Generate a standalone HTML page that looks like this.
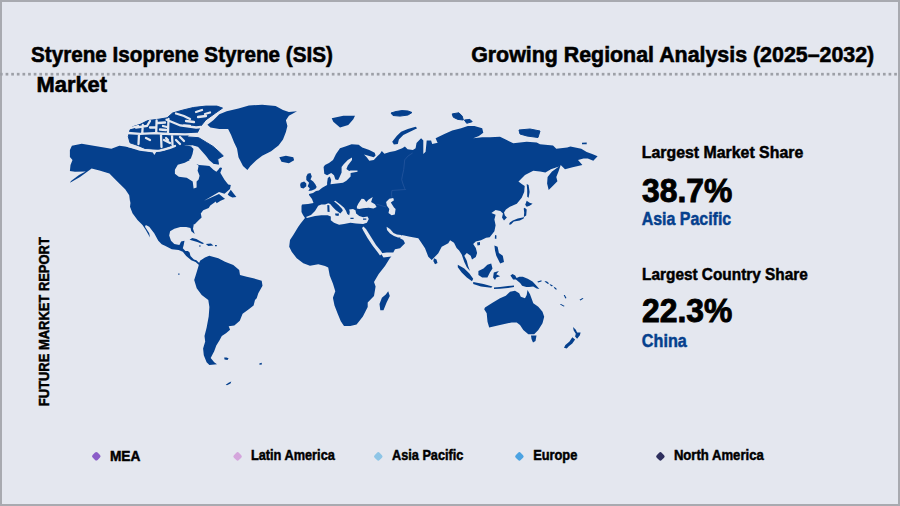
<!DOCTYPE html>
<html><head><meta charset="utf-8"><style>
html,body{margin:0;padding:0;}
body{width:900px;height:506px;overflow:hidden;background:#e4e7ef;position:relative;font-family:"Liberation Sans",sans-serif;}
.frame{position:absolute;left:0;top:0;width:896px;height:502px;border:2px solid #a8aab0;}
svg.map{position:absolute;left:0;top:0;}
</style></head><body>
<div class="frame"></div>
<svg class="map" width="900" height="506" viewBox="0 0 900 506"><path fill="#05408d" d="M69.9 150.0L71.9 145.8L81.7 143.8L99.5 146.8L111.4 148.8L119.3 145.8L125.0 146.6L132.9 148.2L140.8 149.8L148.7 151.4L152.7 152.2L154.3 155.0L156.6 151.4L164.6 150.6L169.3 148.2L172.5 145.1L174.4 141.0L178.3 144.0L181.3 144.5L186.9 145.5L191.6 146.5L193.5 149.0L192.5 154.0L191.0 158.0L190.0 160.5L195.0 163.5L199.0 165.0L205.0 165.6L209.4 166.0L213.4 169.8L216.4 171.7L218.3 169.8L220.3 167.0L222.3 167.5L220.3 172.7L224.3 179.6L228.2 184.6L230.8 185.0L230.0 189.0L224.5 193.7L219.0 192.1L204.0 200.8L219.0 194.0L224.5 198.4L225.3 198.8L220.6 200.8L216.6 203.2L215.8 201.6L210.3 205.6L208.7 207.9L203.2 210.3L200.8 213.5L201.6 217.4L198.4 220.6L194.5 224.5L193.9 223.7L193.0 228.8L194.7 233.9L191.3 231.3L190.5 227.9L186.2 227.1L180.3 227.1L174.3 228.8L170.1 231.3L169.2 235.6L171.0 240.7L174.3 244.1L179.4 244.9L181.1 241.5L184.5 240.7L183.7 244.9L182.8 248.3L185.4 250.9L187.9 250.9L189.6 252.6L190.5 256.0L193.9 259.4L196.4 260.2L199.0 262.8L201.5 260.2L203.5 259.0L203.0 262.0L199.0 265.0L195.6 261.9L191.3 260.2L186.2 256.0L182.8 251.7L178.6 250.0L171.8 249.2L165.0 245.8L161.7 244.2L158.3 240.8L154.2 233.3L149.2 226.7L145.8 225.0L145.0 226.7L149.2 233.3L150.0 237.5L145.8 230.0L142.5 225.0L137.5 220.0L132.5 213.3L130.0 206.7L130.8 200.0L130.2 203.1L129.2 195.2L125.2 189.3L117.3 181.4L109.4 173.5L99.5 170.5L91.6 168.5L89.6 170.0L80.0 177.0L70.0 182.8L71.0 181.0L79.0 175.0L85.7 171.5L75.0 171.8L69.9 171.0L70.5 165.0L72.5 160.0L69.9 157.0ZM207.4 124.7L213.3 120.2L219.3 114.3L226.7 111.3L238.5 108.4L248.9 105.4L262.2 104.7L275.6 106.1L283.0 109.9L288.9 112.1L297.0 111.3L288.9 115.8L285.9 120.2L287.4 126.1L285.9 132.1L283.0 139.5L278.5 145.4L271.1 151.3L262.2 155.8L256.3 160.2L250.4 166.1L247.4 169.9L243.0 166.1L238.5 157.3L237.0 148.4L234.1 142.4L231.1 135.0L228.1 129.1L219.3 129.1L210.4 127.6ZM279.3 157.3L285.9 155.8L293.3 157.3L294.1 160.2L288.9 163.2L281.5 161.7ZM307.7 173.8L310.5 173.1L311.8 176.6L310.5 179.4L313.2 181.5L315.3 184.2L316.7 187.0L315.3 189.1L311.8 190.4L308.4 191.1L309.8 188.4L307.7 186.3L309.1 182.8L306.3 180.1L306.3 176.6ZM300.8 182.8L304.2 181.5L306.3 183.5L306.3 186.3L303.5 188.4L300.8 187.7L300.1 184.9ZM331.7 118.3L343.3 115.8L355.0 115.8L353.3 119.2L348.3 125.0L340.0 127.5L333.3 121.7ZM392.2 141.7L396.7 136.1L401.1 131.7L407.8 128.9L415.6 126.7L417.2 128.3L410.0 131.7L403.3 135.0L398.9 139.4L397.8 143.9L393.9 144.4ZM582.0 142.7L586.7 142.5L586.7 144.3L582.0 144.3ZM325.0 165.0L329.0 163.0L333.0 160.0L336.0 154.0L340.0 148.3L345.3 146.6L351.6 144.3L358.7 144.8L362.2 147.4L369.3 150.1L374.7 152.8L375.6 155.4L373.8 157.2L370.2 156.3L364.0 154.6L366.7 157.2L369.3 160.8L373.8 159.9L377.3 156.3L380.0 153.7L381.8 151.0L384.4 153.7L389.8 151.9L395.1 151.0L402.2 148.3L404.9 146.6L407.6 149.2L412.9 150.1L415.6 148.3L416.5 143.0L421.1 138.3L423.3 140.6L423.3 153.9L425.6 151.7L426.7 140.6L431.1 140.6L432.2 143.9L437.8 142.8L438.9 146.1L435.6 138.3L444.4 133.9L452.2 130.6L461.1 128.3L467.8 126.1L474.4 126.1L482.2 128.3L483.3 132.8L478.9 136.1L473.3 138.3L482.2 137.2L490.0 137.2L500.0 136.7L506.7 140.0L513.3 143.3L526.7 141.7L536.7 142.5L540.0 144.3L553.0 145.4L556.3 148.7L567.2 147.6L570.4 146.5L581.3 148.7L586.7 152.0L592.2 154.1L597.6 156.3L593.3 160.7L587.8 158.5L583.5 158.5L578.0 160.1L582.4 165.0L572.6 167.2L565.0 169.3L560.7 165.0L558.5 171.5L556.3 177.0L557.4 181.3L553.0 185.7L548.7 190.0L547.1 183.5L547.6 177.0L552.0 171.5L559.0 166.5L550.9 169.3L545.4 172.6L540.0 171.5L533.3 170.8L525.0 175.0L518.3 181.7L517.8 181.0L521.7 184.0L524.7 185.9L524.2 191.9L521.7 197.8L516.8 203.7L509.9 206.7L505.9 209.6L504.0 212.6L504.9 215.6L506.9 217.5L504.0 220.5L502.0 217.5L503.0 213.6L500.3 211.1L495.6 209.9L491.4 212.9L495.6 214.7L494.4 219.4L495.6 225.3L494.4 231.3L489.7 237.2L486.1 237.7L481.0 240.3L475.8 241.6L473.2 244.1L475.8 248.0L477.1 253.1L475.8 257.0L472.0 259.5L470.7 255.7L466.8 253.1L464.3 255.7L466.8 260.8L468.1 265.9L470.0 271.1L466.8 267.2L464.3 262.1L463.0 258.2L461.7 254.4L459.1 250.5L456.6 248.0L454.0 242.8L450.1 240.3L448.3 243.3L441.7 246.7L438.3 253.3L431.7 260.0L428.3 256.7L425.0 248.3L421.7 243.3L418.3 238.3L410.0 236.7L401.7 235.0L400.0 238.3L403.3 240.0L405.0 243.3L400.0 248.3L395.0 249.2L393.3 252.5L386.7 252.5L380.8 253.3L383.5 257.4L391.4 256.6L389.8 258.2L385.0 266.1L378.7 274.0L374.0 281.9L375.6 286.6L374.0 296.1L367.7 302.4L367.7 307.1L362.9 316.6L356.6 324.5L350.3 326.1L344.0 326.1L340.8 321.3L337.6 313.5L334.5 305.6L332.9 297.7L335.3 291.3L332.9 283.4L329.7 275.5L328.2 267.6L325.0 266.0L318.3 264.2L310.0 265.8L303.3 263.3L296.7 258.3L291.7 251.7L289.2 246.7L290.0 240.0L293.3 235.0L298.3 226.7L301.0 223.0L305.0 218.0L303.0 215.0L301.5 212.0L301.5 206.0L302.0 204.5L308.0 204.0L313.5 203.0L312.0 199.0L309.0 195.0L309.0 194.0L313.0 193.0L316.0 191.0L318.8 190.4L322.2 187.7L327.1 184.9L327.1 182.8L327.8 178.0L329.8 176.6L331.2 180.1L330.5 184.2L336.8 183.5L343.0 182.8L346.4 180.8L350.6 176.6L350.6 173.1L357.5 171.8L357.5 170.4L350.6 170.4L349.2 171.1L346.4 169.0L347.8 165.5L352.0 160.0L352.0 157.5L347.8 160.0L343.7 164.2L341.6 166.9L341.6 172.5L339.5 177.3L338.1 180.1L335.4 179.4L334.0 175.2L331.2 173.1L327.1 175.2L324.3 173.8L323.6 166.9ZM200.0 260.8L205.0 257.5L209.2 255.8L218.3 258.3L225.0 261.7L233.3 265.0L239.2 270.0L240.0 275.0L246.7 276.7L253.3 278.3L261.7 280.8L262.5 285.8L258.3 293.3L256.7 298.3L255.0 300.0L253.6 305.5L248.1 309.7L242.6 313.8L239.8 320.7L234.3 325.6L228.7 326.3L230.1 329.7L226.0 333.2L221.8 336.0L219.7 340.1L216.3 345.6L214.2 351.2L212.1 355.3L210.7 358.1L214.2 362.2L217.0 364.3L209.4 365.0L206.6 362.2L203.8 355.3L203.1 348.4L205.2 341.5L204.5 336.0L206.6 327.7L208.7 316.6L209.4 306.9L208.3 300.0L201.7 295.0L196.7 288.3L194.2 280.0L195.8 275.0L198.3 266.7ZM224.2 357.6L226.5 357.4L228.6 358.2L227.5 359.9L224.5 359.6ZM388.2 291.3L389.8 296.1L386.6 302.4L383.5 310.3L380.3 310.3L379.5 304.0L381.9 297.7L385.8 294.5ZM434.0 258.3L436.5 259.5L437.5 263.0L435.0 264.2L433.3 261.0ZM495.0 235.0L496.5 235.5L496.3 239.0L494.8 238.5ZM526.7 200.7L529.6 202.7L532.6 203.7L529.6 205.7L526.7 206.7L525.2 204.7ZM524.7 207.7L526.7 209.6L526.2 215.6L522.7 217.5L517.8 218.5L512.8 220.5L509.9 222.5L508.9 224.4L510.9 224.4L513.8 221.5L519.8 220.5L523.7 218.5L524.2 212.6L523.7 208.6ZM526.7 184.0L528.6 184.9L529.6 191.9L528.6 197.8L527.2 196.8L527.2 189.9ZM457.8 264.7L464.3 268.5L469.4 273.6L473.2 278.8L472.0 281.3L466.8 277.5L461.7 272.4L457.8 267.2ZM473.2 282.0L483.5 283.9L492.5 286.5L491.2 287.8L481.0 286.5L473.2 283.9ZM478.4 271.1L483.5 268.5L487.4 264.7L491.2 263.4L492.5 268.5L489.9 272.4L487.4 277.5L482.2 277.5L478.4 274.9ZM493.8 272.4L498.9 271.1L496.3 274.3L500.2 276.2L496.3 277.5L495.0 280.1L493.1 277.5ZM494.4 245.4L497.6 246.7L498.9 253.1L502.8 255.7L504.0 262.1L500.2 263.4L496.3 255.7L495.0 250.5ZM510.4 275.4L512.5 274.0L515.2 275.4L516.6 278.1L519.4 276.8L522.8 276.8L527.7 278.8L532.5 281.6L535.3 284.4L539.4 288.9L536.7 288.5L533.2 286.5L529.1 287.1L526.3 287.1L522.1 285.8L520.1 283.0L515.9 279.5L513.1 279.5L511.8 277.5ZM485.0 307.5L491.7 303.3L500.0 298.3L505.8 295.8L510.0 291.7L515.0 290.8L519.2 293.3L520.8 296.7L525.0 298.3L526.7 295.0L527.5 290.0L530.0 294.2L533.3 303.3L538.3 306.7L542.5 311.7L544.2 316.7L542.5 323.3L538.3 330.0L534.2 334.2L528.3 334.2L523.3 330.0L520.0 325.0L516.7 322.5L511.7 322.5L503.3 324.2L496.7 325.8L489.2 327.5L487.5 321.7L486.7 313.3L484.2 309.2ZM531.0 335.5L536.5 335.5L535.5 341.0L533.0 342.5L531.5 339.0ZM573.0 326.9L575.8 329.7L577.1 332.5L580.6 332.5L579.9 335.2L577.1 338.7L575.1 336.6L575.8 333.8L573.7 330.4ZM572.3 337.3L575.1 339.4L572.3 343.5L568.8 346.3L566.8 348.4L564.0 347.7L565.4 344.9L569.5 341.5ZM189.6 239.8L192.2 238.1L196.4 239.0L200.7 241.5L204.1 243.2L202.4 243.9L197.3 241.9L192.2 240.5ZM205.8 244.1L210.9 243.5L213.4 245.4L208.3 246.0ZM227.7 194.5L230.8 189.7L233.2 192.9L236.4 196.9L232.4 197.6L229.3 196.1ZM477.0 242.5L480.0 242.0L480.0 245.0L477.5 245.4ZM494.0 287.5L500.0 287.0L508.0 286.0L514.0 285.5L514.0 287.0L508.0 288.0L500.0 288.8L494.0 289.0ZM537.4 281.6L541.5 280.2L541.5 281.6L538.0 282.6ZM199.0 245.4L200.7 245.4L200.7 246.6L199.0 246.6ZM215.0 245.0L216.8 245.0L216.8 246.2L215.0 246.2ZM259.3 363.5L261.7 362.8L261.9 364.4L259.5 364.8ZM225.7 384.8L229.0 382.6L231.3 381.6L230.5 383.4L227.0 385.3ZM178.2 273.6L179.5 273.6L179.5 274.8L178.2 274.8ZM544.5 281.0L547.0 281.5L549.0 283.3L548.0 284.0L545.5 282.3ZM549.5 284.0L552.0 285.0L553.0 286.0L551.0 286.2ZM553.5 286.5L556.0 288.0L557.0 289.5L555.0 289.2ZM563.7 295.0L564.8 295.0L566.5 298.0L565.3 298.6ZM559.8 304.2L561.0 304.0L564.7 306.0L563.5 306.6ZM579.5 299.8L582.5 298.1L583.5 298.6L580.5 300.6Z"/><path fill="#05408d" stroke="#05408d" stroke-width="1" stroke-linejoin="round" d="M181.5 138.3L188.4 137.0L198.7 137.7L206.6 142.5L213.0 146.4L219.3 152.0L223.3 155.9L217.7 159.1L218.5 164.6L213.0 164.6L208.2 159.9L205.1 155.9L201.1 152.0L197.2 146.4L191.6 144.9L186.9 144.9L181.3 143.3ZM391.0 113.0L396.0 111.5L402.0 110.6L408.0 111.0L412.0 112.5L408.0 115.0L400.0 116.1L393.0 115.5ZM452.2 113.9L458.9 112.8L462.2 116.1L463.3 120.0L457.8 119.4L453.3 117.2ZM519.0 130.0L530.0 129.0L540.0 131.0L538.0 137.5L527.0 136.0L520.0 134.0ZM464.4 120.0L470.0 119.4L472.2 121.7L466.7 123.3ZM128.3 136.5L130.0 130.0L132.5 126.8L140.8 124.1L147.7 120.6L158.8 119.2L167.1 117.8L172.6 113.0L182.3 110.2L193.4 107.5L205.8 106.1L216.9 106.1L222.5 108.1L215.5 113.0L205.8 119.9L200.3 126.8L197.5 132.4L188.0 135.0L186.0 143.7L180.0 146.0L172.5 145.1L164.0 148.5L158.0 149.5L145.0 148.5L138.0 145.5L130.0 142.8Z"/><path fill="#e4e7ef" d="M174.9 169.8L177.8 164.8L184.8 162.8L188.0 161.0L191.0 160.0L194.5 162.2L198.6 165.8L197.6 170.7L199.6 175.7L198.6 179.6L196.6 181.6L196.6 187.5L193.6 188.5L192.7 181.6L186.7 177.7L178.8 176.7L174.9 173.7ZM306.0 217.0L311.0 215.0L315.0 211.0L318.2 205.8L321.3 204.5L325.1 204.5L328.3 203.2L330.2 203.9L332.7 207.0L335.9 210.2L338.4 212.1L340.3 213.4L341.6 212.1L342.8 210.8L342.2 208.9L338.4 205.1L334.0 201.3L335.3 200.7L340.3 204.5L344.1 207.7L346.0 210.8L347.3 214.0L349.2 215.3L349.8 212.1L349.2 209.6L353.0 208.9L355.5 210.2L356.1 213.4L359.3 215.9L363.1 217.2L367.5 216.5L368.8 219.0L366.9 222.8L363.1 224.1L356.1 223.5L350.4 222.8L344.1 224.1L339.1 224.7L334.0 222.8L330.8 220.3L330.8 216.5L327.7 215.3L321.3 215.3L315.0 215.9L307.0 218.0ZM356.9 206.6L358.4 203.4L361.6 198.7L364.0 199.1L366.3 201.9L368.7 199.5L372.7 197.1L371.1 201.9L375.0 204.2L376.6 207.0L373.5 208.6L368.7 207.8L363.2 208.2L359.2 209.0L356.9 208.6ZM386.1 201.9L389.3 198.7L393.2 197.9L394.0 200.3L390.8 202.6L394.0 207.4L395.6 209.0L394.8 214.5L391.6 215.3L388.5 212.9L389.3 209.0L386.9 205.8ZM363.5 226.5L366.0 229.0L371.0 237.0L376.0 245.0L381.0 251.0L382.5 253.5L380.0 255.5L377.5 252.0L372.5 245.5L367.5 238.0L363.5 231.0L362.0 228.0ZM386.6 226.8L390.0 229.0L393.5 233.0L397.0 234.5L401.0 235.0L402.0 237.5L398.0 237.5L394.0 236.0L390.0 233.5L387.0 230.0Z"/><path fill="none" stroke="#e4e7ef" stroke-width="2.3" stroke-linecap="round" d="M192.8,146.5 L197.5,148 L201.5,152.5 L205,156.5 L208,160.5 L213,164.8 L219,166 L223.5,166.8 M190.5,160 L195,163.5 M128,133 L140,133.8 L154.6,133.2 L169.4,134 L185,134.3 L197,134 M166.5,119.8 L180.3,125.5 L196.1,127.5 L201,127 M142.8,125 L142.3,132.5 M156.6,120.5 L156.2,132.5 M168.5,119 L168,132.5 M139,134.5 L138.5,144 M161,135 L161.5,147 M172,135 L172.5,145 M150,121 L147,126 L136,127.5 M128,146 L140,149.6 L152,151 L160,150.6 L170,147.8 L175,146 M176,113.5 L184,116 L190,119 M150,127.5 L156,127.5 M163,126 L167,127 M180,137 L184,141 M166,138 L168,140 M146,138 L150,140 M184,125.5 L190,126 M158,123 L165,122.5 M196,112 L202,110 M205,114 L210,112.5 M131,128 L138,126 M160,129.5 L166,130 M164,140 L170,143 M176,140 L180,144 M186,121 L194,122 M198,117 L206,116"/><path fill="#05408d" d="M327.3 205.1L329.3 205.3L329.6 212.1L327.5 211.8ZM335.0 213.6L339.1 213.4L338.5 215.9L335.5 215.5ZM350.4 217.8L353.6 217.8L353.6 219.0L350.4 219.0ZM363.0 218.4L366.3 218.4L366.3 219.7L363.0 219.7Z"/><path fill="none" stroke="#2f5da3" stroke-width="0.6" d="M412.6,153 L408,156 L404.7,159.9 L404.2,165 L403.7,169.8 L402.5,175 L401.7,179.6 L403,184 L404.7,188.5 L405.7,189.5 L398,190 L391.9,190.5 L391.5,194 L391.9,197.4 M376.6,204.2 L381,205.5 L386.1,207"/><rect x="-0.02" y="72.85" width="2.7" height="2.7" fill="#9da0a7"/><rect x="5.60" y="72.85" width="2.7" height="2.7" fill="#9da0a7"/><rect x="11.23" y="72.85" width="2.7" height="2.7" fill="#9da0a7"/><rect x="16.85" y="72.85" width="2.7" height="2.7" fill="#9da0a7"/><rect x="22.48" y="72.85" width="2.7" height="2.7" fill="#9da0a7"/><rect x="28.10" y="72.85" width="2.7" height="2.7" fill="#9da0a7"/><rect x="33.72" y="72.85" width="2.7" height="2.7" fill="#9da0a7"/><rect x="39.35" y="72.85" width="2.7" height="2.7" fill="#9da0a7"/><rect x="44.97" y="72.85" width="2.7" height="2.7" fill="#9da0a7"/><rect x="50.60" y="72.85" width="2.7" height="2.7" fill="#9da0a7"/><rect x="56.22" y="72.85" width="2.7" height="2.7" fill="#9da0a7"/><rect x="61.84" y="72.85" width="2.7" height="2.7" fill="#9da0a7"/><rect x="67.47" y="72.85" width="2.7" height="2.7" fill="#9da0a7"/><rect x="73.09" y="72.85" width="2.7" height="2.7" fill="#9da0a7"/><rect x="78.72" y="72.85" width="2.7" height="2.7" fill="#9da0a7"/><rect x="84.34" y="72.85" width="2.7" height="2.7" fill="#9da0a7"/><rect x="89.96" y="72.85" width="2.7" height="2.7" fill="#9da0a7"/><rect x="95.59" y="72.85" width="2.7" height="2.7" fill="#9da0a7"/><rect x="101.21" y="72.85" width="2.7" height="2.7" fill="#9da0a7"/><rect x="106.84" y="72.85" width="2.7" height="2.7" fill="#9da0a7"/><rect x="112.46" y="72.85" width="2.7" height="2.7" fill="#9da0a7"/><rect x="118.08" y="72.85" width="2.7" height="2.7" fill="#9da0a7"/><rect x="123.71" y="72.85" width="2.7" height="2.7" fill="#9da0a7"/><rect x="129.33" y="72.85" width="2.7" height="2.7" fill="#9da0a7"/><rect x="134.96" y="72.85" width="2.7" height="2.7" fill="#9da0a7"/><rect x="140.58" y="72.85" width="2.7" height="2.7" fill="#9da0a7"/><rect x="146.20" y="72.85" width="2.7" height="2.7" fill="#9da0a7"/><rect x="151.83" y="72.85" width="2.7" height="2.7" fill="#9da0a7"/><rect x="157.45" y="72.85" width="2.7" height="2.7" fill="#9da0a7"/><rect x="163.08" y="72.85" width="2.7" height="2.7" fill="#9da0a7"/><rect x="168.70" y="72.85" width="2.7" height="2.7" fill="#9da0a7"/><rect x="174.32" y="72.85" width="2.7" height="2.7" fill="#9da0a7"/><rect x="179.95" y="72.85" width="2.7" height="2.7" fill="#9da0a7"/><rect x="185.57" y="72.85" width="2.7" height="2.7" fill="#9da0a7"/><rect x="191.20" y="72.85" width="2.7" height="2.7" fill="#9da0a7"/><rect x="196.82" y="72.85" width="2.7" height="2.7" fill="#9da0a7"/><rect x="202.44" y="72.85" width="2.7" height="2.7" fill="#9da0a7"/><rect x="208.07" y="72.85" width="2.7" height="2.7" fill="#9da0a7"/><rect x="213.69" y="72.85" width="2.7" height="2.7" fill="#9da0a7"/><rect x="219.32" y="72.85" width="2.7" height="2.7" fill="#9da0a7"/><rect x="224.94" y="72.85" width="2.7" height="2.7" fill="#9da0a7"/><rect x="230.56" y="72.85" width="2.7" height="2.7" fill="#9da0a7"/><rect x="236.19" y="72.85" width="2.7" height="2.7" fill="#9da0a7"/><rect x="241.81" y="72.85" width="2.7" height="2.7" fill="#9da0a7"/><rect x="247.44" y="72.85" width="2.7" height="2.7" fill="#9da0a7"/><rect x="253.06" y="72.85" width="2.7" height="2.7" fill="#9da0a7"/><rect x="258.68" y="72.85" width="2.7" height="2.7" fill="#9da0a7"/><rect x="264.31" y="72.85" width="2.7" height="2.7" fill="#9da0a7"/><rect x="269.93" y="72.85" width="2.7" height="2.7" fill="#9da0a7"/><rect x="275.56" y="72.85" width="2.7" height="2.7" fill="#9da0a7"/><rect x="281.18" y="72.85" width="2.7" height="2.7" fill="#9da0a7"/><rect x="286.80" y="72.85" width="2.7" height="2.7" fill="#9da0a7"/><rect x="292.43" y="72.85" width="2.7" height="2.7" fill="#9da0a7"/><rect x="298.05" y="72.85" width="2.7" height="2.7" fill="#9da0a7"/><rect x="303.68" y="72.85" width="2.7" height="2.7" fill="#9da0a7"/><rect x="309.30" y="72.85" width="2.7" height="2.7" fill="#9da0a7"/><rect x="314.92" y="72.85" width="2.7" height="2.7" fill="#9da0a7"/><rect x="320.55" y="72.85" width="2.7" height="2.7" fill="#9da0a7"/><rect x="326.17" y="72.85" width="2.7" height="2.7" fill="#9da0a7"/><rect x="331.80" y="72.85" width="2.7" height="2.7" fill="#9da0a7"/><rect x="337.42" y="72.85" width="2.7" height="2.7" fill="#9da0a7"/><rect x="343.04" y="72.85" width="2.7" height="2.7" fill="#9da0a7"/><rect x="348.67" y="72.85" width="2.7" height="2.7" fill="#9da0a7"/><rect x="354.29" y="72.85" width="2.7" height="2.7" fill="#9da0a7"/><rect x="359.92" y="72.85" width="2.7" height="2.7" fill="#9da0a7"/><rect x="365.54" y="72.85" width="2.7" height="2.7" fill="#9da0a7"/><rect x="371.16" y="72.85" width="2.7" height="2.7" fill="#9da0a7"/><rect x="376.79" y="72.85" width="2.7" height="2.7" fill="#9da0a7"/><rect x="382.41" y="72.85" width="2.7" height="2.7" fill="#9da0a7"/><rect x="388.04" y="72.85" width="2.7" height="2.7" fill="#9da0a7"/><rect x="393.66" y="72.85" width="2.7" height="2.7" fill="#9da0a7"/><rect x="399.28" y="72.85" width="2.7" height="2.7" fill="#9da0a7"/><rect x="404.91" y="72.85" width="2.7" height="2.7" fill="#9da0a7"/><rect x="410.53" y="72.85" width="2.7" height="2.7" fill="#9da0a7"/><rect x="416.16" y="72.85" width="2.7" height="2.7" fill="#9da0a7"/><rect x="421.78" y="72.85" width="2.7" height="2.7" fill="#9da0a7"/><rect x="427.40" y="72.85" width="2.7" height="2.7" fill="#9da0a7"/><rect x="433.03" y="72.85" width="2.7" height="2.7" fill="#9da0a7"/><rect x="438.65" y="72.85" width="2.7" height="2.7" fill="#9da0a7"/><rect x="444.28" y="72.85" width="2.7" height="2.7" fill="#9da0a7"/><rect x="449.90" y="72.85" width="2.7" height="2.7" fill="#9da0a7"/><rect x="455.52" y="72.85" width="2.7" height="2.7" fill="#9da0a7"/><rect x="461.15" y="72.85" width="2.7" height="2.7" fill="#9da0a7"/><rect x="466.77" y="72.85" width="2.7" height="2.7" fill="#9da0a7"/><rect x="472.40" y="72.85" width="2.7" height="2.7" fill="#9da0a7"/><rect x="478.02" y="72.85" width="2.7" height="2.7" fill="#9da0a7"/><rect x="483.64" y="72.85" width="2.7" height="2.7" fill="#9da0a7"/><rect x="489.27" y="72.85" width="2.7" height="2.7" fill="#9da0a7"/><rect x="494.89" y="72.85" width="2.7" height="2.7" fill="#9da0a7"/><rect x="500.52" y="72.85" width="2.7" height="2.7" fill="#9da0a7"/><rect x="506.14" y="72.85" width="2.7" height="2.7" fill="#9da0a7"/><rect x="511.76" y="72.85" width="2.7" height="2.7" fill="#9da0a7"/><rect x="517.39" y="72.85" width="2.7" height="2.7" fill="#9da0a7"/><rect x="523.01" y="72.85" width="2.7" height="2.7" fill="#9da0a7"/><rect x="528.64" y="72.85" width="2.7" height="2.7" fill="#9da0a7"/><rect x="534.26" y="72.85" width="2.7" height="2.7" fill="#9da0a7"/><rect x="539.88" y="72.85" width="2.7" height="2.7" fill="#9da0a7"/><rect x="545.51" y="72.85" width="2.7" height="2.7" fill="#9da0a7"/><rect x="551.13" y="72.85" width="2.7" height="2.7" fill="#9da0a7"/><rect x="556.76" y="72.85" width="2.7" height="2.7" fill="#9da0a7"/><rect x="562.38" y="72.85" width="2.7" height="2.7" fill="#9da0a7"/><rect x="568.00" y="72.85" width="2.7" height="2.7" fill="#9da0a7"/><rect x="573.63" y="72.85" width="2.7" height="2.7" fill="#9da0a7"/><rect x="579.25" y="72.85" width="2.7" height="2.7" fill="#9da0a7"/><rect x="584.88" y="72.85" width="2.7" height="2.7" fill="#9da0a7"/><rect x="590.50" y="72.85" width="2.7" height="2.7" fill="#9da0a7"/><rect x="596.12" y="72.85" width="2.7" height="2.7" fill="#9da0a7"/><rect x="601.75" y="72.85" width="2.7" height="2.7" fill="#9da0a7"/><rect x="607.37" y="72.85" width="2.7" height="2.7" fill="#9da0a7"/><rect x="613.00" y="72.85" width="2.7" height="2.7" fill="#9da0a7"/><rect x="618.62" y="72.85" width="2.7" height="2.7" fill="#9da0a7"/><rect x="624.24" y="72.85" width="2.7" height="2.7" fill="#9da0a7"/><rect x="629.87" y="72.85" width="2.7" height="2.7" fill="#9da0a7"/><rect x="635.49" y="72.85" width="2.7" height="2.7" fill="#9da0a7"/><rect x="641.12" y="72.85" width="2.7" height="2.7" fill="#9da0a7"/><rect x="646.74" y="72.85" width="2.7" height="2.7" fill="#9da0a7"/><rect x="652.36" y="72.85" width="2.7" height="2.7" fill="#9da0a7"/><rect x="657.99" y="72.85" width="2.7" height="2.7" fill="#9da0a7"/><rect x="663.61" y="72.85" width="2.7" height="2.7" fill="#9da0a7"/><rect x="669.24" y="72.85" width="2.7" height="2.7" fill="#9da0a7"/><rect x="674.86" y="72.85" width="2.7" height="2.7" fill="#9da0a7"/><rect x="680.48" y="72.85" width="2.7" height="2.7" fill="#9da0a7"/><rect x="686.11" y="72.85" width="2.7" height="2.7" fill="#9da0a7"/><rect x="691.73" y="72.85" width="2.7" height="2.7" fill="#9da0a7"/><rect x="697.36" y="72.85" width="2.7" height="2.7" fill="#9da0a7"/><rect x="702.98" y="72.85" width="2.7" height="2.7" fill="#9da0a7"/><rect x="708.60" y="72.85" width="2.7" height="2.7" fill="#9da0a7"/><rect x="714.23" y="72.85" width="2.7" height="2.7" fill="#9da0a7"/><rect x="719.85" y="72.85" width="2.7" height="2.7" fill="#9da0a7"/><rect x="725.48" y="72.85" width="2.7" height="2.7" fill="#9da0a7"/><rect x="731.10" y="72.85" width="2.7" height="2.7" fill="#9da0a7"/><rect x="736.72" y="72.85" width="2.7" height="2.7" fill="#9da0a7"/><rect x="742.35" y="72.85" width="2.7" height="2.7" fill="#9da0a7"/><rect x="747.97" y="72.85" width="2.7" height="2.7" fill="#9da0a7"/><rect x="753.60" y="72.85" width="2.7" height="2.7" fill="#9da0a7"/><rect x="759.22" y="72.85" width="2.7" height="2.7" fill="#9da0a7"/><rect x="764.84" y="72.85" width="2.7" height="2.7" fill="#9da0a7"/><rect x="770.47" y="72.85" width="2.7" height="2.7" fill="#9da0a7"/><rect x="776.09" y="72.85" width="2.7" height="2.7" fill="#9da0a7"/><rect x="781.72" y="72.85" width="2.7" height="2.7" fill="#9da0a7"/><rect x="787.34" y="72.85" width="2.7" height="2.7" fill="#9da0a7"/><rect x="792.96" y="72.85" width="2.7" height="2.7" fill="#9da0a7"/><rect x="798.59" y="72.85" width="2.7" height="2.7" fill="#9da0a7"/><rect x="804.21" y="72.85" width="2.7" height="2.7" fill="#9da0a7"/><rect x="809.84" y="72.85" width="2.7" height="2.7" fill="#9da0a7"/><rect x="815.46" y="72.85" width="2.7" height="2.7" fill="#9da0a7"/><rect x="821.08" y="72.85" width="2.7" height="2.7" fill="#9da0a7"/><rect x="826.71" y="72.85" width="2.7" height="2.7" fill="#9da0a7"/><rect x="832.33" y="72.85" width="2.7" height="2.7" fill="#9da0a7"/><rect x="837.96" y="72.85" width="2.7" height="2.7" fill="#9da0a7"/><rect x="843.58" y="72.85" width="2.7" height="2.7" fill="#9da0a7"/><rect x="849.20" y="72.85" width="2.7" height="2.7" fill="#9da0a7"/><rect x="854.83" y="72.85" width="2.7" height="2.7" fill="#9da0a7"/><rect x="860.45" y="72.85" width="2.7" height="2.7" fill="#9da0a7"/><rect x="866.08" y="72.85" width="2.7" height="2.7" fill="#9da0a7"/><rect x="871.70" y="72.85" width="2.7" height="2.7" fill="#9da0a7"/><rect x="877.32" y="72.85" width="2.7" height="2.7" fill="#9da0a7"/><rect x="882.95" y="72.85" width="2.7" height="2.7" fill="#9da0a7"/><rect x="888.57" y="72.85" width="2.7" height="2.7" fill="#9da0a7"/><rect x="894.20" y="72.85" width="2.7" height="2.7" fill="#9da0a7"/><rect x="899.82" y="72.85" width="2.7" height="2.7" fill="#9da0a7"/><rect x="92.80" y="452.80" width="7" height="7" rx="1.8" fill="#8a5cc8" transform="rotate(45 96.3 456.3)"/><rect x="234.10" y="452.90" width="7" height="7" rx="1.8" fill="#d4a6dc" transform="rotate(45 237.6 456.4)"/><rect x="374.80" y="452.90" width="7" height="7" rx="1.8" fill="#8ec5e6" transform="rotate(45 378.3 456.4)"/><rect x="515.90" y="452.90" width="7" height="7" rx="1.8" fill="#4ca3e2" transform="rotate(45 519.4 456.4)"/><rect x="656.90" y="452.90" width="7" height="7" rx="1.8" fill="#2e2f5e" transform="rotate(45 660.4 456.4)"/><g font-family="Liberation Sans" font-weight="bold"><text x="31.09" y="61.90" font-size="22.6" textLength="301.80" lengthAdjust="spacingAndGlyphs" fill="#000000" stroke="#000000" stroke-width="0.6" >Styrene Isoprene Styrene (SIS)</text><text x="36.49" y="92.10" font-size="22.6" textLength="70.58" lengthAdjust="spacingAndGlyphs" fill="#000000" stroke="#000000" stroke-width="0.6" >Market</text><text x="471.15" y="61.70" font-size="22.6" textLength="403.07" lengthAdjust="spacingAndGlyphs" fill="#000000" stroke="#000000" stroke-width="0.6" >Growing Regional Analysis (2025–2032)</text><text x="641.85" y="158.40" font-size="16.8" textLength="161.37" lengthAdjust="spacingAndGlyphs" fill="#000000" stroke="#000000" stroke-width="0.5" >Largest Market Share</text><text x="642.06" y="201.50" font-size="32.5" textLength="90.25" lengthAdjust="spacingAndGlyphs" fill="#000000" stroke="#000000" stroke-width="0.9" >38.7%</text><text x="641.68" y="225.30" font-size="19" textLength="89.54" lengthAdjust="spacingAndGlyphs" fill="#05408d" stroke="#05408d" stroke-width="0.5" >Asia Pacific</text><text x="642.08" y="280.40" font-size="16.8" textLength="165.72" lengthAdjust="spacingAndGlyphs" fill="#000000" stroke="#000000" stroke-width="0.5" >Largest Country Share</text><text x="642.04" y="322.10" font-size="32.5" textLength="90.26" lengthAdjust="spacingAndGlyphs" fill="#000000" stroke="#000000" stroke-width="0.9" >22.3%</text><text x="641.85" y="347.20" font-size="18.5" textLength="44.92" lengthAdjust="spacingAndGlyphs" fill="#05408d" stroke="#05408d" stroke-width="0.5" >China</text><text x="109.88" y="460.60" font-size="15" textLength="30.43" lengthAdjust="spacingAndGlyphs" fill="#000000" stroke="#000000" stroke-width="0.5" >MEA</text><text x="250.94" y="460.40" font-size="15" textLength="83.89" lengthAdjust="spacingAndGlyphs" fill="#000000" stroke="#000000" stroke-width="0.5" >Latin America</text><text x="392.05" y="460.40" font-size="15" textLength="71.29" lengthAdjust="spacingAndGlyphs" fill="#000000" stroke="#000000" stroke-width="0.5" >Asia Pacific</text><text x="533.13" y="459.90" font-size="15" textLength="44.21" lengthAdjust="spacingAndGlyphs" fill="#000000" stroke="#000000" stroke-width="0.5" >Europe</text><text x="673.92" y="460.40" font-size="15" textLength="89.80" lengthAdjust="spacingAndGlyphs" fill="#000000" stroke="#000000" stroke-width="0.5" >North America</text><g transform="translate(48.6 405.4) rotate(-90)"><text x="-0.78" y="0.00" font-size="14.5" textLength="168.99" lengthAdjust="spacingAndGlyphs" fill="#000000" stroke="#000000" stroke-width="0.5" >FUTURE MARKET REPORT</text></g></g></svg>
</body></html>
